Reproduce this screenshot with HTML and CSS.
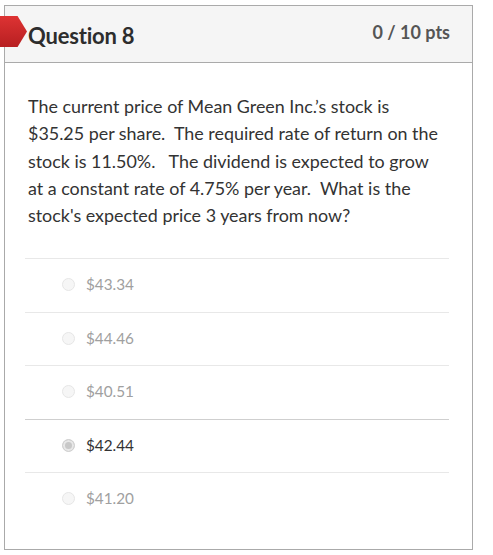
FILE: index.html
```html
<!DOCTYPE html>
<html>
<head>
<meta charset="utf-8">
<link rel="stylesheet" href="styles.css">
</head>
<body>
<div class="question">
  <div class="badge"></div>
  <div class="header">
    <div class="title">Question 8</div>
    <div class="pts">0 / 10 pts</div>
  </div>
  <div class="content">
    <p class="text">The current price of Mean Green Inc.’s stock is $35.25 per share.&nbsp; The required rate of return on the stock is 11.50%.&nbsp;&nbsp; The dividend is expected to grow at a constant rate of 4.75% per year.&nbsp; What is the stock's expected price 3 years from now?</p>
    <div class="answers">
      <div class="answer"><span class="radio"></span><span class="label">$43.34</span></div>
      <div class="answer"><span class="radio"></span><span class="label">$44.46</span></div>
      <div class="answer"><span class="radio"></span><span class="label">$40.51</span></div>
      <div class="answer selected"><span class="radio"></span><span class="label">$42.44</span></div>
      <div class="answer"><span class="radio"></span><span class="label">$41.20</span></div>
    </div>
  </div>
</div>
</body>
</html>
```
FILE: styles.css
```css
html, body {
  margin: 0;
  padding: 0;
  background: #fff;
}
body {
  font-family: Lato, "Liberation Sans", sans-serif;
  color: #2d3b45;
}
.question {
  position: relative;
  margin: 5px 0 0 4px;
  width: 467px;
  height: 543px;
  border: 1px solid #aaaaaa;
  box-sizing: content-box;
}
.badge {
  position: absolute;
  left: -5px;
  top: 10px;
  width: 27px;
  height: 31px;
  background: linear-gradient(#de3333, #b71f21);
  clip-path: polygon(0 0, 65% 0, 100% 50%, 65% 100%, 0 100%);
}
.header {
  height: 56px;
  background: #f5f5f5;
  border-bottom: 1px solid #aaaaaa;
  display: flex;
  justify-content: space-between;
  padding: 0 22px 0 23px;
}
.title {
  font-size: 22px;
  font-weight: 700;
  color: #2d2d2d;
  margin-top: 16px;
  letter-spacing: -0.2px;
}
.pts {
  font-size: 18px;
  font-weight: 700;
  color: #555;
  margin-top: 15px;
}
.content {
  padding: 30px 23px 0 20px;
}
.text {
  width: 418px;
  margin: 0 0 29px 3px;
  font-size: 17.9px;
  line-height: 27.3px;
  color: #333;
}
.answers {
  width: 424px;
}
.answer {
  height: 53.5px;
  border-top: 1px solid #e8e8e8;
  display: flex;
  align-items: center;
  padding-left: 37px;
  padding-bottom: 3px;
  box-sizing: border-box;
}
.answer.selected {
  border-top-color: #cfcfcf;
}
.radio {
  width: 13px;
  height: 13px;
  border-radius: 50%;
  border: 1px solid #e6e6e6;
  background: #f6f6f6;
  box-sizing: border-box;
  margin-right: 11px;
  margin-top: 1px;
}
.selected .radio {
  border-color: #d0d0d0;
  background: #c8c8c8;
  box-shadow: inset 0 0 0 2px #e8e8e8;
}
.label {
  font-size: 15.3px;
  color: #a0a0a0;
}
.selected .label {
  color: #333;
}
```
